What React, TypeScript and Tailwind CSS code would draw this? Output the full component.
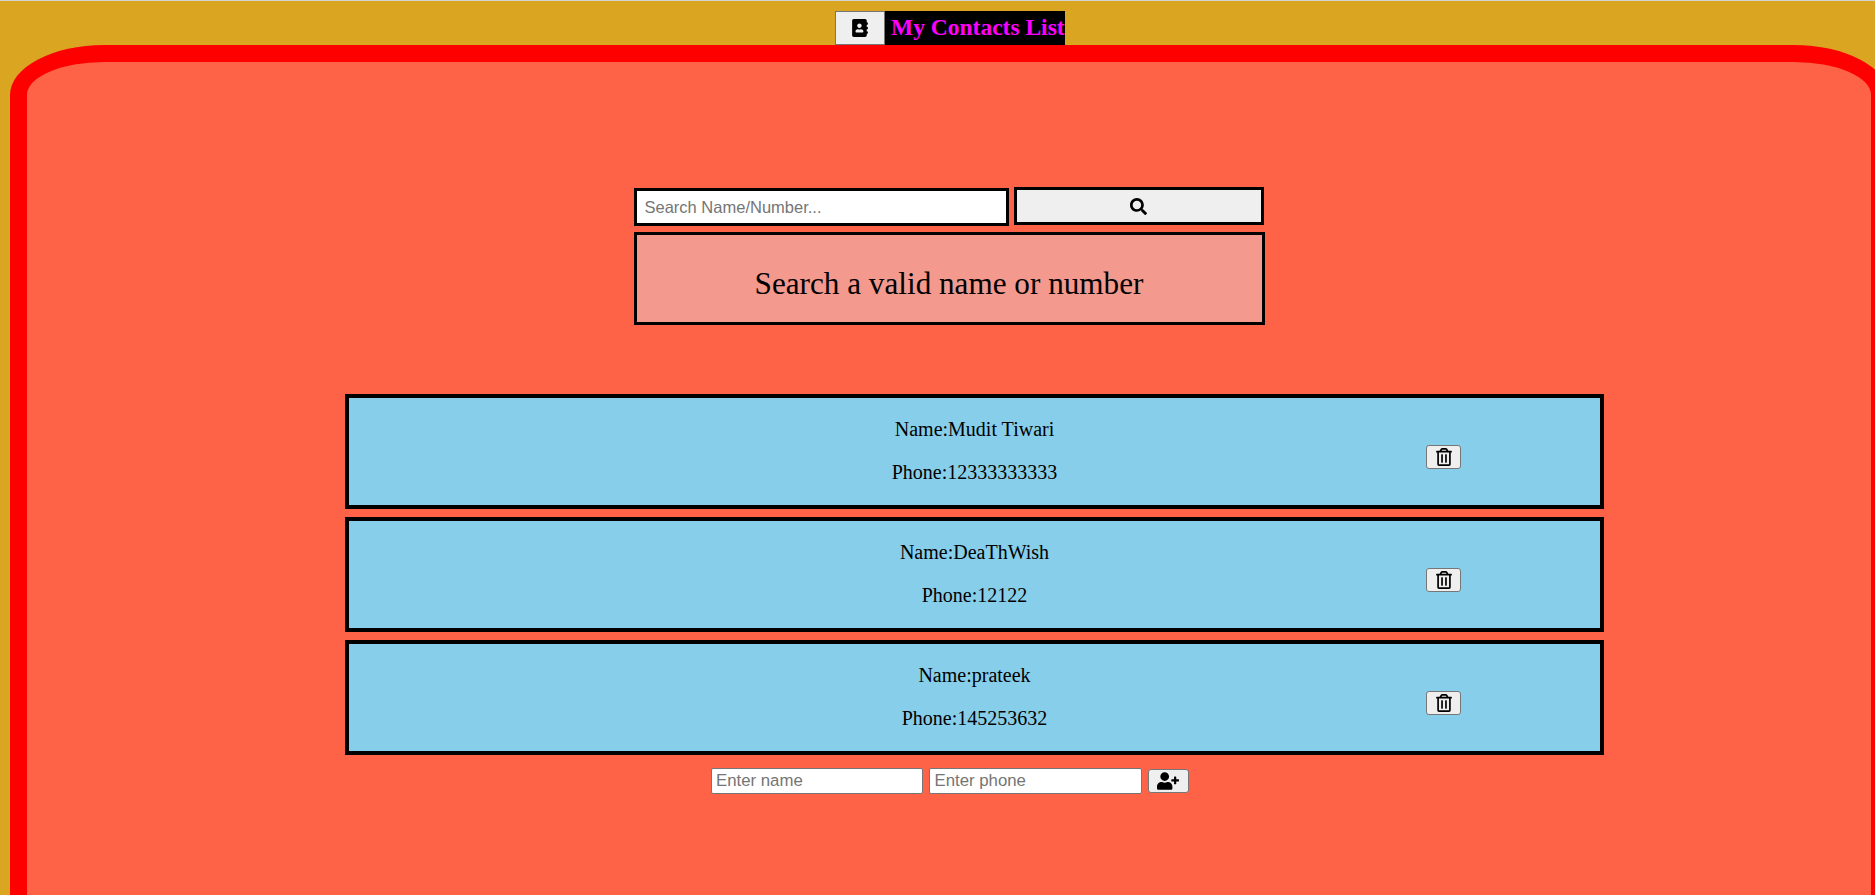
import { FaAddressBook, FaRegTrashAlt, FaSearch, FaUserPlus } from 'react-icons/fa';

const contacts = [
  { name: 'Mudit Tiwari', phone: '12333333333' },
  { name: 'DeaThWish', phone: '12122' },
  { name: 'prateek', phone: '145253632' },
];

function ContactCard({ name, phone }: { name: string; phone: string }) {
  return (
    <div className="grid h-[115px] w-[1259px] grid-cols-[452px_347px_452px] items-center border-4 border-black bg-[#87ceeb] text-[20px] leading-[23px]">
      <div className="col-start-2 -mt-px text-center">
        <p>Name:{name}</p>
        <p className="mt-[20px]">Phone:{phone}</p>
      </div>
      <button className="mt-[10px] ml-[278px] flex h-[24px] w-[35px] items-center justify-center rounded-[3px] border border-[#767676] bg-[#efefef] text-black">
        <FaRegTrashAlt size={18} />
      </button>
    </div>
  );
}

export default function App() {
  return (
    <div className="h-[895px] overflow-hidden border-t border-[#d3d3d3] bg-[#daa520] font-['Liberation_Serif',serif] text-black">
      <header className="flex h-[44px] items-start justify-center pt-[10px] pl-[25px]">
        <div className="flex h-[34px]">
          <button className="flex h-[34px] w-[50px] items-center justify-center border border-[#767676] bg-[#efefef]">
            <FaAddressBook size={18} />
          </button>
          <h1 className="flex h-[34px] w-[180px] items-center whitespace-nowrap bg-black pl-[6px] text-[23.5px] font-bold text-[#ff00ff]">
            My Contacts List
          </h1>
        </div>
      </header>

      <main className="ml-[10px] h-[1000px] w-[1878px] rounded-[94px/50px] border-[17px] border-[#ff0000] bg-[#ff6347] pt-[125px]">
        <div className="flex flex-col items-center">
          <div className="flex w-[631px] items-start">
            <input
              placeholder="Search Name/Number..."
              className="mt-px h-[38px] w-[375px] border-[3px] border-black bg-white px-[8px] font-['Liberation_Sans',sans-serif] text-[16.5px] outline-none placeholder:text-[#757575]"
            />
            <button className="ml-[5px] flex h-[38px] w-[250px] items-center justify-center border-[3px] border-black bg-[#efefef]">
              <FaSearch size={17} />
            </button>
          </div>
          <div className="mt-[6px] flex h-[93px] w-[631px] items-center justify-center border-[3px] border-black bg-[#f4998d] pt-[11px] text-[31.2px]">
            Search a valid name or number
          </div>
        </div>

        <div className="mt-[69px] ml-[318px] flex flex-col gap-[8px]">
          {contacts.map((contact) => (
            <ContactCard key={contact.name} name={contact.name} phone={contact.phone} />
          ))}
        </div>

        <div className="mt-[13px] flex items-center justify-center gap-[6px] pl-px font-['Liberation_Sans',sans-serif] text-[16.8px]">
          <input
            placeholder="Enter name"
            className="h-[26px] w-[212.5px] rounded-[2px] border border-[#767676] bg-white px-[4.5px] outline-none placeholder:text-[#757575]"
          />
          <input
            placeholder="Enter phone"
            className="h-[26px] w-[212.5px] rounded-[2px] border border-[#767676] bg-white px-[4.5px] outline-none placeholder:text-[#757575]"
          />
          <button className="flex h-[24px] w-[41px] items-center justify-center rounded-[3px] border border-[#767676] bg-[#efefef]">
            <FaUserPlus size={22} />
          </button>
        </div>
      </main>
    </div>
  );
}
